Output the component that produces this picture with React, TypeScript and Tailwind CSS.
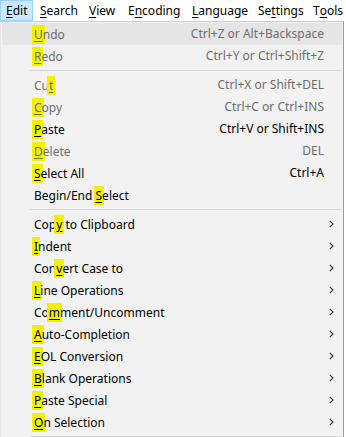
import type { ReactNode } from "react";

type Item = {
  pre: string;
  key: string;
  post: string;
  shortcut?: string;
  disabled?: boolean;
  sub?: boolean;
  hover?: boolean;
};

const groups: Item[][] = [
  [
    { pre: "", key: "U", post: "ndo", shortcut: "Ctrl+Z or Alt+Backspace", disabled: true, hover: true },
    { pre: "", key: "R", post: "edo", shortcut: "Ctrl+Y or Ctrl+Shift+Z", disabled: true },
  ],
  [
    { pre: "Cu", key: "t", post: "", shortcut: "Ctrl+X or Shift+DEL", disabled: true },
    { pre: "", key: "C", post: "opy", shortcut: "Ctrl+C or Ctrl+INS", disabled: true },
    { pre: "", key: "P", post: "aste", shortcut: "Ctrl+V or Shift+INS" },
    { pre: "", key: "D", post: "elete", shortcut: "DEL", disabled: true },
    { pre: "", key: "S", post: "elect All", shortcut: "Ctrl+A" },
    { pre: "Begin/End ", key: "S", post: "elect" },
  ],
  [
    { pre: "Cop", key: "y", post: " to Clipboard", sub: true },
    { pre: "", key: "I", post: "ndent", sub: true },
    { pre: "Con", key: "v", post: "ert Case to", sub: true },
    { pre: "", key: "L", post: "ine Operations", sub: true },
    { pre: "Co", key: "m", post: "ment/Uncomment", sub: true },
    { pre: "", key: "A", post: "uto-Completion", sub: true },
    { pre: "", key: "E", post: "OL Conversion", sub: true },
    { pre: "", key: "B", post: "lank Operations", sub: true },
    { pre: "", key: "P", post: "aste Special", sub: true },
    { pre: "", key: "O", post: "n Selection", sub: true },
  ],
];

const menus: { pre: string; key: string; post: string; w: string; active?: boolean }[] = [
  { pre: "", key: "E", post: "dit", w: "w-[33px]", active: true },
  { pre: "", key: "S", post: "earch", w: "w-[49px]" },
  { pre: "", key: "V", post: "iew", w: "w-[39px]" },
  { pre: "E", key: "n", post: "coding", w: "w-[64px]" },
  { pre: "", key: "L", post: "anguage", w: "w-[66px]" },
  { pre: "Se", key: "t", post: "tings", w: "w-[55px]" },
  { pre: "T", key: "o", post: "ols", w: "w-[40px]" },
];

function Marked({ children }: { children: ReactNode }) {
  return (
    <span className="-mx-[2px] inline-block bg-[#f2f200] px-[2px] leading-[19px]">
      <span className="underline decoration-1 underline-offset-2">{children}</span>
    </span>
  );
}

function Chevron() {
  return (
    <svg width="5" height="8" viewBox="0 0 5 8" className="ml-[5px]">
      <path d="M0.8 0.8 L4 4 L0.8 7.2" fill="none" stroke="#333" strokeWidth="1.1" />
    </svg>
  );
}

function Row({ it }: { it: Item }) {
  return (
    <div
      className={`flex h-[22px] items-center pl-[32px] ${it.hover ? "bg-[#e5e5e5]" : ""} ${
        it.disabled ? "text-[#6d6d6d]" : "text-black"
      }`}
    >
      <span className="flex-1 whitespace-pre">
        {it.pre}
        <Marked>{it.key}</Marked>
        {it.post}
      </span>
      {it.shortcut && <span className="whitespace-pre">{it.shortcut}</span>}
      <span className="flex w-[18px] items-center">{it.sub && <Chevron />}</span>
    </div>
  );
}

function Separator() {
  return (
    <div className="flex h-[7px] items-center pl-[28px]">
      <div className="h-px flex-1 bg-[#d7d7d7]" />
    </div>
  );
}

export default function App() {
  return (
    <div
      className="flex h-[437px] w-[346px] flex-col overflow-hidden bg-white text-[12px] text-black"
      style={{ fontFamily: '"Segoe UI", "Noto Sans", sans-serif' }}
    >
      <div className="flex h-[21px] shrink-0 bg-white">
        {menus.map((m) => (
          <div
            key={m.post}
            className={`${m.w} flex items-center whitespace-pre ${
              m.active ? "border border-[#99d1ff] bg-[#cce8ff] pl-[5px]" : "pl-[7px]"
            }`}
          >
            {m.pre}
            <span className="underline decoration-1 underline-offset-2">{m.key}</span>
            {m.post}
          </div>
        ))}
      </div>
      <div className="flex flex-1">
        <div className="w-[344px] border-t border-r border-l border-t-[#cccccc] border-r-[#9a9a9a] border-l-[#e6e6e6] bg-[#f2f2f2] px-[1px] pt-[1px]">
          {groups.map((g, gi) => (
            <div key={gi}>
              {gi > 0 && <Separator />}
              {g.map((it) => (
                <Row key={it.pre + it.key + it.post} it={it} />
              ))}
            </div>
          ))}
          <Separator />
        </div>
        <div className="flex-1 bg-white" />
      </div>
    </div>
  );
}
